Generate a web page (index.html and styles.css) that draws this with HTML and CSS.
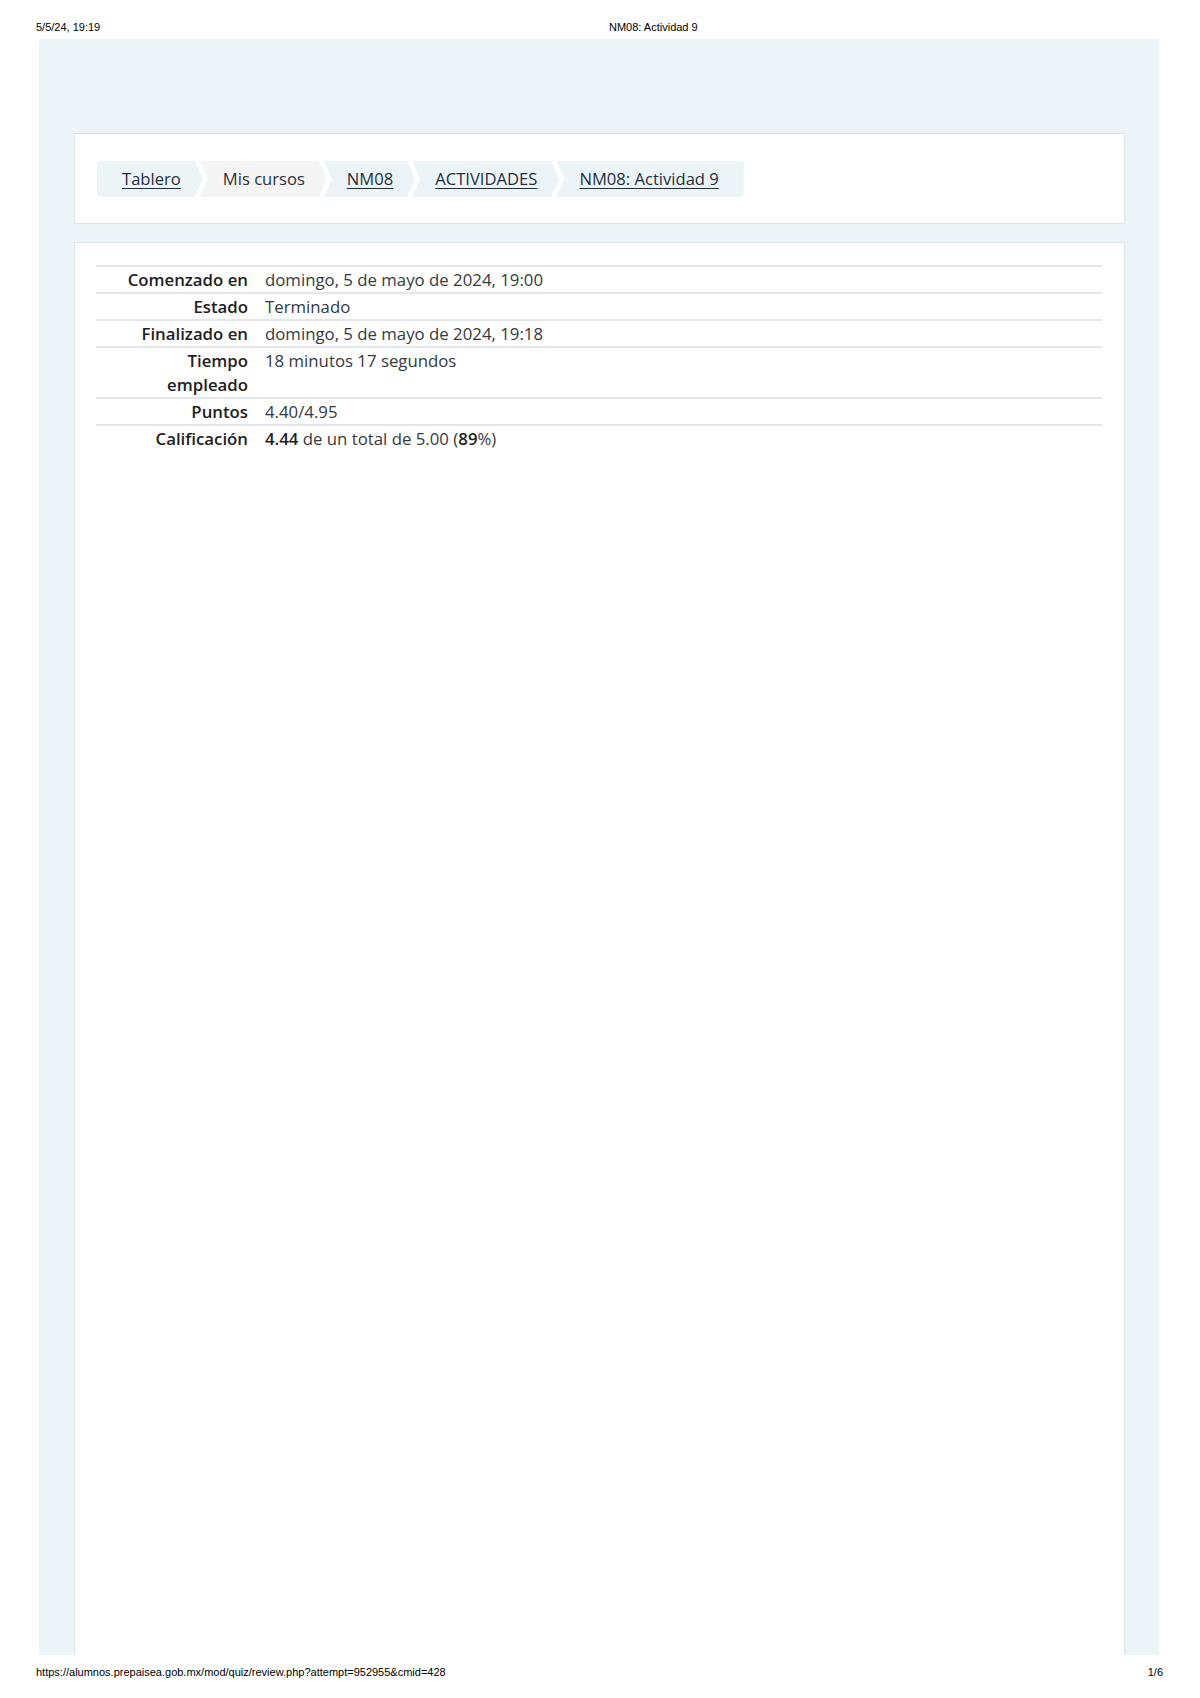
FILE: index.html
```html
<!DOCTYPE html>
<html lang="es">
<head>
<meta charset="utf-8">
<title>NM08: Actividad 9</title>
<link rel="stylesheet" href="styles.css">
</head>
<body>
<header class="print-header">
  <span class="print-date">5/5/24, 19:19</span>
  <span class="print-title">NM08: Actividad 9</span>
</header>
<div class="page">
  <section class="card card-nav">
    <nav aria-label="Barra de navegación">
      <ol class="breadcrumb">
        <li class="crumb crumb-first"><a href="#">Tablero</a></li>
        <li class="crumb crumb-plain"><span>Mis cursos</span></li>
        <li class="crumb"><a href="#">NM08</a></li>
        <li class="crumb"><a href="#">ACTIVIDADES</a></li>
        <li class="crumb crumb-last"><a href="#">NM08: Actividad 9</a></li>
      </ol>
    </nav>
  </section>
  <section class="card card-main">
    <table class="summary">
      <tbody>
        <tr><th>Comenzado en</th><td>domingo, 5 de mayo de 2024, 19:00</td></tr>
        <tr><th>Estado</th><td>Terminado</td></tr>
        <tr><th>Finalizado en</th><td>domingo, 5 de mayo de 2024, 19:18</td></tr>
        <tr><th>Tiempo empleado</th><td>18 minutos 17 segundos</td></tr>
        <tr><th>Puntos</th><td>4.40/4.95</td></tr>
        <tr><th>Calificación</th><td><b>4.44</b> de un total de 5.00 (<b>89</b>%)</td></tr>
      </tbody>
    </table>
  </section>
</div>
<footer class="print-footer">
  <span>https://alumnos.prepaisea.gob.mx/mod/quiz/review.php?attempt=952955&amp;cmid=428</span>
  <span>1/6</span>
</footer>
</body>
</html>
```

FILE: styles.css
```css
html, body {
  margin: 0;
  padding: 0;
  background: #ffffff;
}

body {
  width: 1200px;
  height: 1698px;
  overflow: hidden;
  font-family: "Open Sans", "Noto Sans", sans-serif;
  color: #1d2125;
}

.print-header {
  box-sizing: border-box;
  height: 39px;
  padding: 20px 0 0 36px;
  display: flex;
  font-family: "Liberation Sans", Arial, sans-serif;
  font-size: 11px;
  line-height: 14px;
  color: #000;
}

.print-date {
  width: 573px;
}

.page {
  box-sizing: border-box;
  width: 1120px;
  height: 1616px;
  margin-left: 39px;
  padding: 94px 34px 0 35px;
  background: #edf4f8;
  overflow: hidden;
}

.card {
  background: #ffffff;
  border: 1.5px solid #dde2e6;
}

.card-nav {
  box-sizing: border-box;
  height: 91px;
  padding: 27px 22px 0 22px;
}

.breadcrumb {
  display: flex;
  width: max-content;
  margin: 0;
  padding: 0;
  list-style: none;
  border-radius: 4px;
  overflow: hidden;
}

.crumb {
  box-sizing: border-box;
  height: 36px;
  display: flex;
  align-items: center;
  padding: 0 22px 2px 23px;
  margin-left: -3px;
  background: #edf4f7;
  font-size: 16.6px;
  clip-path: polygon(0 0, calc(100% - 8px) 0, 100% 50%, calc(100% - 8px) 100%, 0 100%, 8px 50%);
}

.crumb-first {
  margin-left: 0;
  padding-left: 25px;
  clip-path: polygon(0 0, calc(100% - 8px) 0, 100% 50%, calc(100% - 8px) 100%, 0 100%);
}

.crumb-last {
  padding-right: 25px;
  clip-path: polygon(0 0, 100% 0, 100% 100%, 0 100%, 8px 50%);
}

.crumb-plain {
  background: #f5f5f5;
  color: #2b3238;
}

.crumb a {
  color: #1f2f3e;
  text-decoration: underline;
  text-decoration-thickness: 1px;
  text-underline-offset: 3px;
}

.card-main {
  margin-top: 18px;
  min-height: 1600px;
  padding: 22px 22px 0 21px;
}

.summary {
  width: 100%;
  border-collapse: collapse;
  font-size: 16.8px;
  line-height: 24px;
}

.summary tr {
  border-top: 2px solid #e3e6ea;
}

.summary th {
  box-sizing: border-box;
  width: 160px;
  padding: 0.5px 8px 0.5px 22px;
  text-align: right;
  vertical-align: top;
  font-weight: 600;
  color: #1d2125;
}

.summary td {
  padding: 0.5px 0 0.5px 9px;
  vertical-align: top;
  color: #343a40;
}

.summary td b {
  font-weight: 600;
  color: #1d2125;
}

.print-footer {
  display: flex;
  justify-content: space-between;
  margin-top: 10px;
  padding: 0 37px 0 36px;
  font-family: "Liberation Sans", Arial, sans-serif;
  font-size: 11px;
  line-height: 14px;
  color: #000;
}
```
